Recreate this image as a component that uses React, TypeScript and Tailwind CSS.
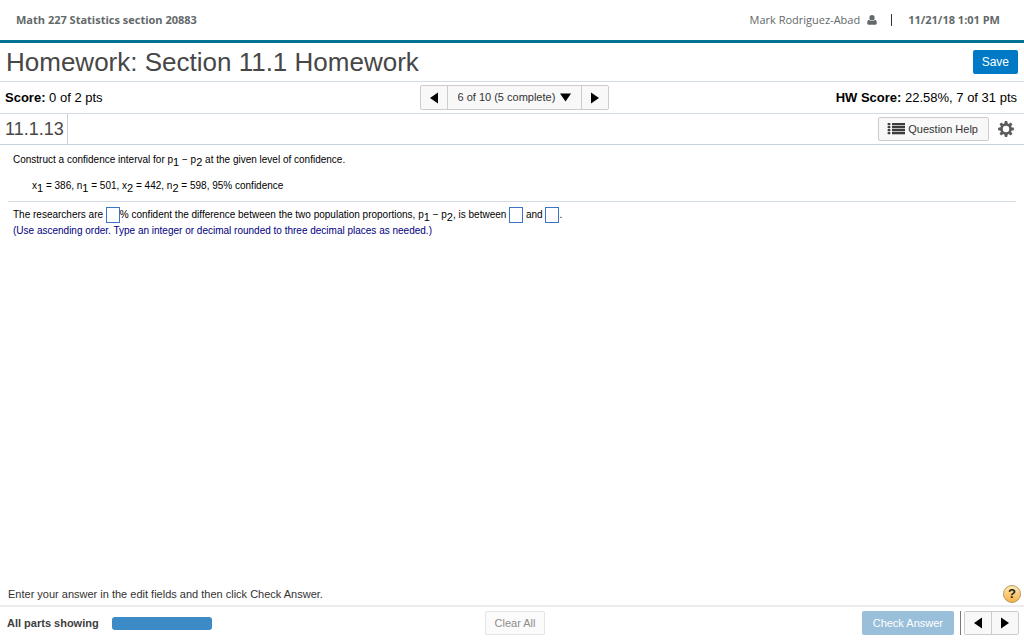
import React from "react";

const smallButton =
  "flex h-full items-center justify-center bg-[#f8f8f8] text-black hover:bg-[#eeeeee]";

function Arrow({ direction }: { direction: "left" | "right" | "down" }) {
  if (direction === "down") {
    return (
      <svg width="11" height="9" viewBox="0 0 11 9" aria-hidden="true" className="shrink-0">
        <path d="M0 0.5H11L5.5 8.5Z" fill="#000" />
      </svg>
    );
  }
  return (
    <svg width="8" height="12" viewBox="0 0 8 12" aria-hidden="true" className="shrink-0">
      <path d={direction === "left" ? "M8 0.5V11.5L0 6Z" : "M0 0.5V11.5L8 6Z"} fill="#000" />
    </svg>
  );
}

function UserIcon() {
  return (
    <svg width="10" height="10" viewBox="0 0 10 10" aria-hidden="true" fill="#63696a">
      <ellipse cx="5" cy="2.7" rx="2.6" ry="2.7" />
      <path d="M2.2 4.7C0.7 5 0.2 6.2 0.2 8C0.2 9.2 0.9 9.8 1.9 9.8H8.1C9.1 9.8 9.8 9.2 9.8 8C9.8 6.2 9.3 5 7.8 4.7C7.1 5.5 6.2 5.9 5 5.9C3.8 5.9 2.9 5.5 2.2 4.7Z" />
    </svg>
  );
}

function ListIcon() {
  return (
    <svg width="18" height="12" viewBox="0 0 18 12" aria-hidden="true" fill="#3c3c3c">
      {[0, 3, 6, 9].map((y) => (
        <g key={y}>
          <rect x="0.5" y={y} width="3" height="2.3" rx="1" />
          <rect x="5" y={y} width="13" height="2.3" />
        </g>
      ))}
    </svg>
  );
}

function GearIcon() {
  return (
    <svg width="16" height="16" viewBox="0 0 16 16" aria-hidden="true">
      <circle cx="8" cy="8" r="4.5" fill="none" stroke="#5c5c5c" strokeWidth="2.6" />
      {[0, 45, 90, 135, 180, 225, 270, 315].map((angle) => (
        <path
          key={angle}
          d="M6.2 3L6.8 0.1H9.2L9.8 3Z"
          fill="#5c5c5c"
          transform={`rotate(${angle} 8 8)`}
        />
      ))}
    </svg>
  );
}

function Sub({ children }: { children: React.ReactNode }) {
  return <sub className="bottom-[-3px] text-[11px]">{children}</sub>;
}

function AnswerBox({ label }: { label: string }) {
  return (
    <input
      type="text"
      aria-label={label}
      className="h-4 w-[14px] border border-[#3c74c8] bg-white px-px align-middle text-[10px] outline-none"
    />
  );
}

export default function App() {
  return (
    <div className="flex min-h-screen flex-col bg-white font-['Liberation_Sans',Arial,sans-serif] text-black">
      <header className="flex h-[43px] items-center justify-between border-b-3 border-[#007393] pr-6 pl-4 font-['Open_Sans',sans-serif] text-[11px] text-[#63696a]">
        <span className="font-bold">Math 227 Statistics section 20883</span>
        <div className="flex items-center">
          <span>Mark Rodriguez-Abad</span>
          <span className="ml-[7px]">
            <UserIcon />
          </span>
          <span className="ml-[14px] h-3 w-px bg-[#30303f]" />
          <time className="ml-4 font-bold">11/21/18 1:01 PM</time>
        </div>
      </header>

      <div className="flex h-[39px] items-center justify-between border-b border-[#d3dae2] px-[6px]">
        <h1 className="text-[26px] leading-9 text-[#474747]">Homework: Section 11.1 Homework</h1>
        <button type="button" className="h-6 rounded-xs bg-[#007ac5] px-[9px] text-[12px] text-white">
          Save
        </button>
      </div>

      <div className="grid h-8 grid-cols-[1fr_auto_1fr] items-center border-b border-[#d3dae2] pr-[7px] pl-[5px] text-[13px]">
        <p>
          <b>Score:</b> 0 of 2 pts
        </p>
        <nav
          aria-label="Questions"
          className="ml-[6px] flex h-[25px] items-stretch overflow-hidden rounded-xs border border-[#cccccc]"
        >
          <button type="button" aria-label="Previous question" className={`${smallButton} w-[26px]`}>
            <Arrow direction="left" />
          </button>
          <div className="grid items-center border-x border-[#cccccc] bg-[#f8f8f8]">
            <select
              aria-label="Question"
              className="col-start-1 row-start-1 h-full w-[133px] appearance-none bg-transparent pl-[10px] text-[11px] text-[#333333]"
            >
              <option>6 of 10 (5 complete)</option>
            </select>
            <span className="pointer-events-none col-start-1 row-start-1 mr-[10px] justify-self-end">
              <Arrow direction="down" />
            </span>
          </div>
          <button type="button" aria-label="Next question" className={`${smallButton} w-[26px]`}>
            <Arrow direction="right" />
          </button>
        </nav>
        <p className="text-right">
          <b>HW Score:</b> 22.58%, 7 of 31 pts
        </p>
      </div>

      <div className="flex h-[31px] items-center justify-between border-b border-[#c9d2df] pr-[10px]">
        <h2 className="flex h-full items-center border-r border-[#c9d2df] pr-[3px] pl-[5px] text-[18px] text-[#474747]">
          11.1.13
        </h2>
        <div className="flex items-center gap-[9px]">
          <button
            type="button"
            className="flex h-6 items-center gap-[3px] rounded-xs border border-[#cccccc] bg-[#f8f8f8] pr-[10px] pl-2 text-[11px] text-[#333333]"
          >
            <ListIcon />
            Question Help
          </button>
          <button type="button" aria-label="Settings">
            <GearIcon />
          </button>
        </div>
      </div>

      <main className="flex-1 px-2 text-[10px] leading-4">
        <div className="border-b border-[#d3dae2] px-[5px] pt-[7px] pb-[7px]">
          <p>
            Construct a confidence interval for p<Sub>1</Sub> − p<Sub>2</Sub> at the given level of
            confidence.
          </p>
          <p className="mt-[10px] pl-[19px]">
            x<Sub>1</Sub> = 386, n<Sub>1</Sub> = 501, x<Sub>2</Sub> = 442, n<Sub>2</Sub> = 598, 95%
            confidence
          </p>
        </div>
        <div className="px-[5px] pt-[5px]">
          <p>
            The researchers are <AnswerBox label="Confidence level" />% confident the difference
            between the two population proportions, p<Sub>1</Sub> − p<Sub>2</Sub>, is between{" "}
            <AnswerBox label="Lower bound" /> and <AnswerBox label="Upper bound" />.
          </p>
          <p className="text-[#000080]">
            (Use ascending order. Type an integer or decimal rounded to three decimal places as
            needed.)
          </p>
        </div>
      </main>

      <footer>
        <div className="flex h-[22px] items-center justify-between pr-[3px] pl-2 text-[11px] text-[#333333]">
          <p>Enter your answer in the edit fields and then click Check Answer.</p>
          <button
            type="button"
            aria-label="Help"
            className="flex size-[18px] items-center justify-center rounded-full border border-[#b39a6b] bg-linear-to-b from-[#ffe9ae] to-[#f6b03c] text-[13px] leading-4 font-bold text-[#222222]"
          >
            ?
          </button>
        </div>
        <div className="grid h-[35px] grid-cols-[1fr_auto_1fr] items-center border-t-2 border-[#ebebf0] pr-[5px] pb-px pl-[7px] text-[11px]">
          <div className="flex items-center gap-[13px]">
            <span className="font-bold text-[#404040]">All parts showing</span>
            <div
              role="progressbar"
              aria-label="All parts showing"
              className="h-[13px] w-[100px] rounded-[3px] bg-[#3c8bc6]"
            />
          </div>
          <button
            type="button"
            className="ml-1 h-6 rounded-xs border border-[#e5e5e5] bg-[#fbfbfb] px-[9px] text-[#8c8c8c]"
          >
            Clear All
          </button>
          <div className="flex items-center justify-end">
            <button type="button" className="h-6 rounded-xs bg-[#99bfdb] px-[11px] text-[11px] text-white">
              Check Answer
            </button>
            <span className="ml-[6px] h-6 w-px bg-[#777777]" />
            <div className="ml-[3px] flex h-6 overflow-hidden rounded-xs border border-[#cccccc]">
              <button type="button" aria-label="Previous part" className={`${smallButton} w-[26px]`}>
                <Arrow direction="left" />
              </button>
              <button
                type="button"
                aria-label="Next part"
                className={`${smallButton} w-[27px] border-l border-[#cccccc]`}
              >
                <Arrow direction="right" />
              </button>
            </div>
          </div>
        </div>
      </footer>
    </div>
  );
}
